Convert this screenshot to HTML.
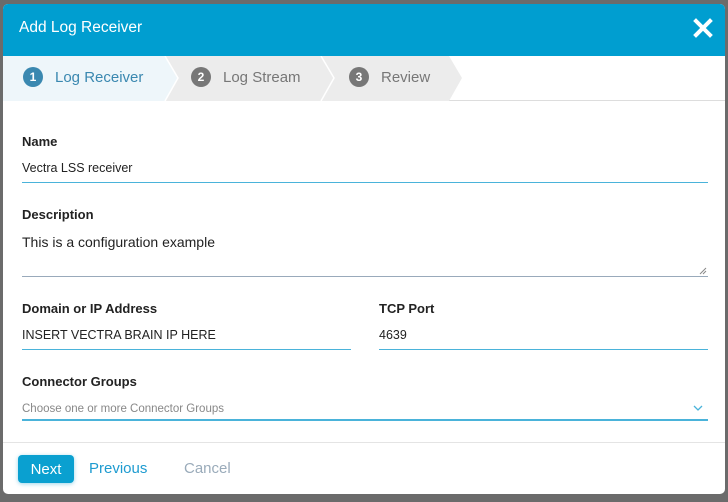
<!DOCTYPE html>
<html><head><style>
*{box-sizing:border-box;margin:0;padding:0}
body{width:728px;height:502px;background:#6b6b6b;font-family:"Liberation Sans",Helvetica,sans-serif;position:relative;overflow:hidden}
.modal{position:absolute;left:3px;top:4px;width:722px;height:490px;background:#fff;border-radius:5px;overflow:hidden}
.hdr{height:52px;background:#009ed0;color:#fff;font-size:15.5px;padding:15px 0 0 16px}
.x{position:absolute;right:12px;top:14px;width:20px;height:20px}
.steps{position:relative;height:45px;border-bottom:1px solid #ddd;background:#fff}
.lab{position:absolute;top:11px;font-size:15px;color:#777}
.num{display:inline-block;width:20px;height:20px;border-radius:50%;background:#777;color:#fff;font-size:12px;text-align:center;line-height:20px;margin-right:12px;vertical-align:1px;font-weight:bold}
.f{position:absolute;font-size:13px}
.l{font-weight:bold;color:#222;font-size:13px}
.line{position:absolute;height:1px;background:#4ab3da}
.v{color:#222;font-size:12.5px}
</style></head><body>
<div class="modal">
 <div class="hdr">Add Log Receiver</div>
 <svg class="x" viewBox="0 0 20 20"><path d="M3 3L17 17M17 3L3 17" stroke="#fff" stroke-width="4" stroke-linecap="square"/></svg>
 <div class="steps">
  <svg width="722" height="45" style="position:absolute;left:0;top:0">
   <polygon points="0,0 162,0 175,22 162,45 0,45" fill="#eef6fa"/>
   <polygon points="162,0 318,0 331,22 318,45 162,45 175,22" fill="#ececec"/>
   <polygon points="318,0 446,0 459,22 446,45 318,45 331,22" fill="#ececec"/>
   <polyline points="162,0 175,22 162,45" fill="none" stroke="#fff" stroke-width="1.5"/>
   <polyline points="318,0 331,22 318,45" fill="none" stroke="#fff" stroke-width="1.5"/>
  </svg>
  <div class="lab" style="left:20px;color:#3a88b0"><span class="num" style="background:#3a88b0">1</span>Log Receiver</div>
  <div class="lab" style="left:188px"><span class="num">2</span>Log Stream</div>
  <div class="lab" style="left:346px"><span class="num">3</span>Review</div>
 </div>
 <div class="f l" style="left:19px;top:130px">Name</div>
 <div class="f v" style="left:19px;top:157px">Vectra LSS receiver</div>
 <div class="line" style="left:19px;top:178px;width:686px"></div>
 <div class="f l" style="left:19px;top:203px">Description</div>
 <div class="f v" style="left:19px;top:230px;font-size:14px">This is a configuration example</div>
 <div class="line" style="left:19px;top:272px;width:686px;background:#9ab"></div>
 <svg style="position:absolute;left:696px;top:263px" width="8" height="8"><path d="M1 7L7 1M4 7L7 4" stroke="#888"/></svg>
 <div class="f l" style="left:19px;top:297px">Domain or IP Address</div>
 <div class="f v" style="left:19px;top:324px">INSERT VECTRA BRAIN IP HERE</div>
 <div class="line" style="left:19px;top:345px;width:329px"></div>
 <div class="f l" style="left:376px;top:297px">TCP Port</div>
 <div class="f v" style="left:376px;top:324px">4639</div>
 <div class="line" style="left:376px;top:345px;width:329px"></div>
 <div class="f l" style="left:19px;top:370px">Connector Groups</div>
 <div class="f" style="left:19px;top:399px;color:#888;font-size:11.5px">Choose one or more Connector Groups</div>
 <svg style="position:absolute;left:690px;top:401px" width="10" height="7"><path d="M1 1L5 5L9 1" stroke="#4ab3da" fill="none" stroke-width="1.3"/></svg>
 <div class="line" style="left:19px;top:415px;width:686px;height:2px"></div>
 <div style="position:absolute;left:0;top:438px;width:722px;height:1px;background:#e4e4e4"></div>
 <div style="position:absolute;left:15px;top:451px;width:56px;height:28px;background:#0aa0d0;border-radius:4px;color:#fff;font-size:15px;text-align:center;line-height:30px;box-shadow:0 1px 4px rgba(0,150,200,.4)">Next</div>
 <div class="f" style="left:86px;top:456px;color:#1e9bd0;font-size:15px">Previous</div>
 <div class="f" style="left:181px;top:456px;color:#9aabba;font-size:15px">Cancel</div>
</div>
</body></html>
